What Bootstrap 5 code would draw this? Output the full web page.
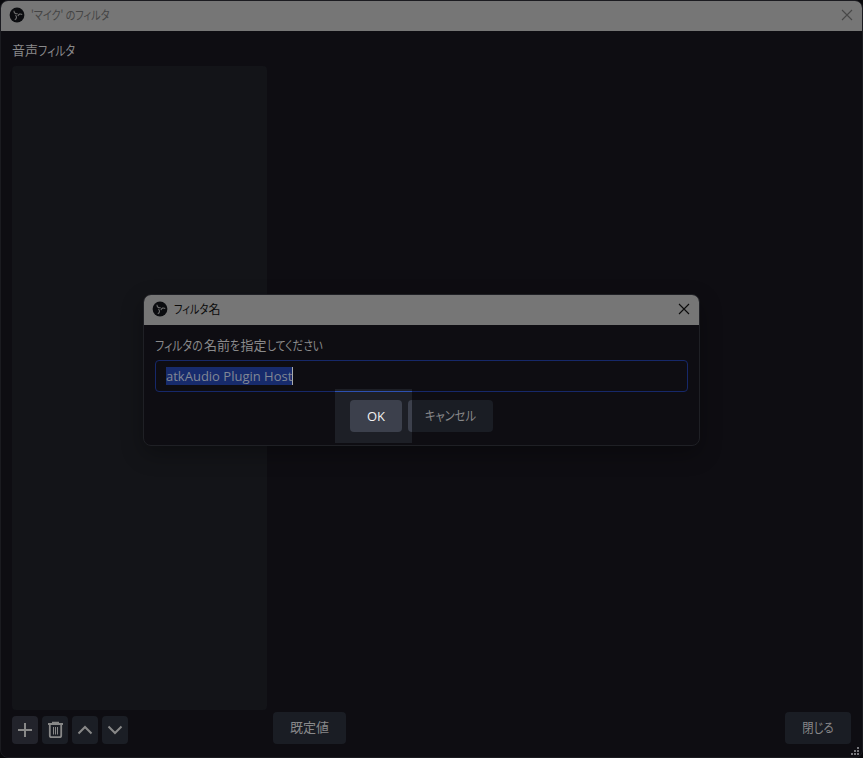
<!DOCTYPE html>
<html lang="ja" data-bs-theme="dark">
<head>
<meta charset="utf-8">
<meta name="viewport" content="width=device-width, initial-scale=1">
<title>'マイク' のフィルタ</title>
<link href="https://cdn.jsdelivr.net/npm/bootstrap@5.3.0/dist/css/bootstrap.min.css" rel="stylesheet">
<style>
body{background:#08080b;font:13px/18px "Open Sans","Noto Sans CJK JP",sans-serif;color:#8a8a8b;height:758px;overflow:hidden}
.window{height:758px;background:#0e0d12;border:1px solid #1b1b20;border-radius:8px}
.titlebar{height:30px;background:#767676;flex:none;padding-bottom:2px}
.window>.titlebar{border-radius:7px 7px 0 0;padding-left:8px;padding-right:9px}
.jp{font-family:"Noto Sans CJK JP",sans-serif;font-feature-settings:"palt";white-space:nowrap}
.kana{display:inline-block;transform:scaleX(.84);transform-origin:0 50%}
.kana-center{display:inline-block;transform:scaleX(.87)}
.run1{width:49px}.run2{width:26px}.run3{width:10.5px}.run4{width:56px}.run5{width:34.5px}
.run4 .kana{transform:scaleX(.82)}
.t-main{color:#444;font-size:12px;margin-left:6px}
.t-dialog{color:#0b0b0b;font-size:12px;margin-left:6px}
.caption-row{height:24px}
.page-body{padding:11px 11px 13px}
.page-body>.caption-row{padding-bottom:1px;margin-top:-1px;height:25px}
.filters{width:255px;height:644px;background:#131418;border-radius:4px}
.footer-row{margin-top:2px}
.tools{padding-top:4px;width:261px}
.tool{width:26px;height:28px;padding:0;background:#1b1e25;border:0;border-radius:4px;color:#888}
.tool.hot{background:#22232b}
.action{height:32px;padding:0;border:0;border-radius:4px;background:#1a1d24;color:#88888a;font-size:13px;line-height:18px}
.action .jp{position:relative;top:-1px}
.w-default{width:73px}.w-close{width:66px}.w-cancel{width:85px}.w-ok{width:52px}
.dialog-box{left:143px;top:294px;width:557px;height:152px;background:#0e0d12;border:1px solid #1f2025;border-radius:8px;box-shadow:0 8px 22px rgba(0,0,0,.3)}
.dialog-box>.titlebar{border-radius:7px 7px 0 0;padding-left:8px;padding-right:9px}
.dialog-content{padding:11px 11px 0}
.choices{padding:8px 0 0 253px}
.name-field{height:32px;border:1px solid #162869;border-radius:4px;padding:0 10px}
.selected{background:#172b6c;color:#818795;height:18px;line-height:18px;width:127px;border-right:1px solid #aaa;white-space:nowrap}
.spot{left:335px;top:389px;width:77px;height:54px;background:#1d1f26;padding:11px 0 0 15px;overflow:hidden}
.spot .edge{left:0;top:2px;width:77px;height:1px;background:#2c50b0}
.spot .action{background:#3c404c;color:#f2f2f2}
.spot .neighbor{width:4px;height:32px;background:#3c404c;border-radius:4px 0 0 4px;margin-left:6px}
.grip{right:3px;bottom:2px}
.ink-dim{color:#484848}.ink{color:#0c0c0c}
</style>
</head>
<body>
<svg width="0" height="0" class="position-absolute" aria-hidden="true">
<symbol id="logo" viewBox="0 0 16 16"><circle cx="8" cy="8" r="7.4" fill="#0b0c0f"/><g fill="none" stroke="#6e6e6e" stroke-width="1.1"><path d="M8.600 6.600C6.500 7.200 4.900 6 5 3.700"/><path d="M8.600 6.600C6.500 7.200 4.900 6 5 3.700" transform="rotate(120 8 8)"/><path d="M8.600 6.600C6.500 7.200 4.900 6 5 3.700" transform="rotate(240 8 8)"/></g></symbol>
<symbol id="close" viewBox="0 0 12 12"><path d="M1 1l10 10M11 1L1 11" fill="none" stroke="currentColor" stroke-width="1.1"/></symbol>
</svg>
<main class="window d-flex flex-column">
  <header class="titlebar d-flex align-items-center">
    <svg width="16" height="16"><use href="#logo"/></svg>
    <span class="jp kana t-main">'マイク' のフィルタ</span>
    <svg class="ms-auto ink-dim" width="12" height="12"><use href="#close"/></svg>
  </header>
  <section class="page-body d-flex flex-column flex-grow-1">
    <div class="caption-row jp d-flex"><span class="run2">音声</span><span><span class="kana">フィルタ</span></span></div>
    <div class="filters"></div>
    <div class="footer-row d-flex">
      <div class="tools d-flex gap-1">
        <button class="btn tool hot"><svg width="26" height="28"><path d="M13 7v14M6 14h14" stroke="currentColor" stroke-width="2"/></svg></button>
        <button class="btn tool"><svg width="26" height="28" fill="none" stroke="currentColor"><path d="M6 8h15M10 6.800h7" stroke-width="2"/><path d="M7.800 9v10.500q0 1.700 1.700 1.700h8q1.700 0 1.700-1.700V9" stroke-width="1.800"/><path d="M11.500 11v7.500M13.500 11v7.500M15.500 11v7.500" stroke-width="1"/></svg></button>
        <button class="btn tool"><svg width="26" height="28"><path d="M6.500 17.500L13 11l6.500 6.500" fill="none" stroke="currentColor" stroke-width="2"/></svg></button>
        <button class="btn tool"><svg width="26" height="28"><path d="M6.500 10.500L13 17l6.500-6.500" fill="none" stroke="currentColor" stroke-width="2"/></svg></button>
      </div>
      <button class="btn action w-default"><span class="jp">既定値</span></button>
      <button class="btn action w-close ms-auto"><span class="jp kana-center">閉じる</span></button>
    </div>
  </section>
</main>
<div class="dialog-box position-absolute" role="dialog">
  <header class="titlebar d-flex align-items-center">
    <svg width="16" height="16"><use href="#logo"/></svg>
    <span class="jp t-dialog d-flex"><span class="run5"><span class="kana">フィルタ</span></span><span>名</span></span>
    <svg class="ms-auto ink" width="12" height="12"><use href="#close"/></svg>
  </header>
  <div class="dialog-content">
    <div class="caption-row jp d-flex"><span class="run1"><span class="kana">フィルタの</span></span><span class="run2">名前</span><span class="run3"><span class="kana">を</span></span><span class="run2">指定</span><span class="run4"><span class="kana">してください</span></span></div>
    <div class="name-field d-flex align-items-center"><div class="selected">atkAudio Plugin Host</div></div>
    <div class="choices d-flex"><button class="btn action w-cancel"><span class="jp kana-center">キャンセル</span></button></div>
  </div>
</div>
<div class="spot position-absolute d-flex align-items-start">
  <div class="edge position-absolute"></div>
  <button class="btn action w-ok flex-shrink-0">OK</button><div class="neighbor flex-shrink-0"></div>
</div>
<svg class="grip position-absolute" width="9" height="9" fill="#77777b"><path d="M6 0h2v2H6zM3 3h2v2H3zM6 3h2v2H6zM0 6h2v2H0zM3 6h2v2H3zM6 6h2v2H6z"/></svg>
<script src="https://cdn.jsdelivr.net/npm/bootstrap@5.3.0/dist/js/bootstrap.bundle.min.js"></script>
</body>
</html>
